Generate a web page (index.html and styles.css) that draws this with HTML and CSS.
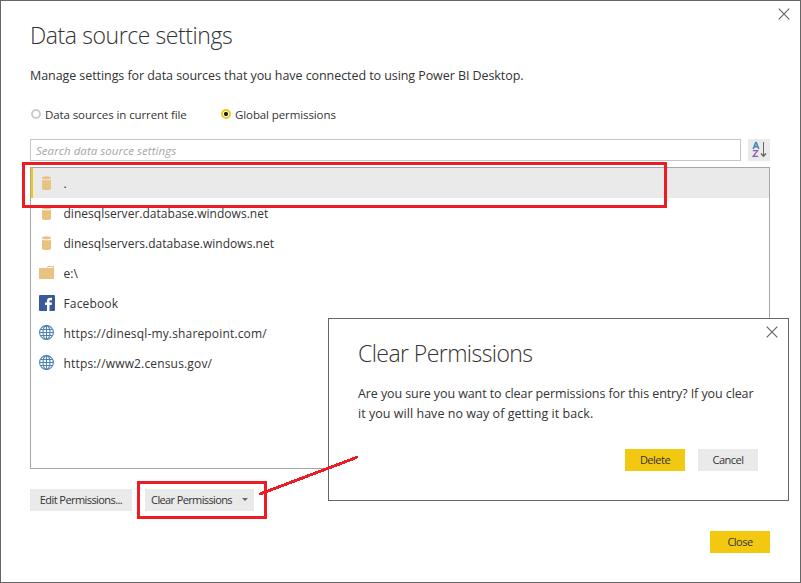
FILE: index.html
```html
<!DOCTYPE html>
<html lang="en">
<head>
    <meta charset="UTF-8">
    <meta name="viewport" content="width=device-width, initial-scale=1.0">
    <title>Data source settings</title>
    <link rel="stylesheet" href="styles.css">
</head>
<body>
    <svg class="sprite" width="0" height="0">
        <symbol id="db" viewBox="0 0 16 16">
            <ellipse cx="7.5" cy="2.700" rx="4.5" ry="1.5" fill="#e9c282"/>
            <path d="M3 4.400c1 1.200 8 1.200 9 0v9.700c-1 1.300-8 1.300-9 0z" fill="#e9c282"/>
        </symbol>
        <symbol id="folder" viewBox="0 0 16 16">
            <path d="M0 3h8l1-2h6v13H0z" fill="#e9c282"/>
            <path d="M9 2.500h5" stroke="#fff" stroke-width="1"/>
        </symbol>
        <symbol id="facebook" viewBox="0 0 16 16">
            <rect width="16" height="16" rx="1" fill="#3b5998"/>
            <path d="M8 16V10H6V7.600h2V6c0-2 1.200-3.200 3.200-3.200H13v2.400h-1.400c-.8 0-1.100.3-1.100 1v1.400H13l-.4 2.400h-2.100V16z" fill="#fff"/>
        </symbol>
        <symbol id="globe" viewBox="0 0 16 16">
            <g fill="none" stroke="#4f82b4" stroke-width="1.100">
                <circle cx="7.500" cy="7.500" r="6.900"/>
                <ellipse cx="7.500" cy="7.500" rx="3.500" ry="6.900"/>
                <path d="M7.500 .5v14M.5 7.500h14M1.700 4.500h11.600M1.700 10.500h11.600"/>
            </g>
        </symbol>
        <symbol id="close" viewBox="0 0 12 12">
            <path d="M.7.7l10.600 10.600M11.300.7L.7 11.300" stroke="#666" stroke-width="1.200"/>
        </symbol>
    </svg>

    <div class="window">
        <svg class="close-icon"><use href="#close"/></svg>
        <h1>Data source settings</h1>
        <p class="intro">Manage settings for data sources that you have connected to using Power BI Desktop.</p>

        <div class="scope">
            <label class="option"><span class="radio"></span>Data sources in current file</label>
            <label class="option"><span class="radio checked"></span>Global permissions</label>
        </div>

        <div class="search-row">
            <div class="search">Search data source settings</div>
            <div class="sort">
                <svg width="22" height="22" viewBox="0 0 22 22">
                    <g fill="none">
                        <path d="M5.200 10L7.700 3.500h.6L10.800 10M6 7.600h4" stroke="#4a86b8" stroke-width="1.600"/>
                        <path d="M4.800 11.600h4.700L5.200 17.400h5" stroke="#8e5cb0" stroke-width="1.300"/>
                        <path d="M15.500 3v14" stroke="#666"/>
                        <path d="M13 14.500l2.500 2.700 2.500-2.700" stroke="#666" stroke-width="1.500"/>
                    </g>
                </svg>
            </div>
        </div>

        <ul class="sources">
            <li class="selected"><svg><use href="#db"/></svg><span>.</span></li>
            <li><svg><use href="#db"/></svg><span class="host">dinesqlserver.database.windows.net</span></li>
            <li><svg><use href="#db"/></svg><span class="host">dinesqlservers.database.windows.net</span></li>
            <li><svg><use href="#folder"/></svg><span>e:\</span></li>
            <li><svg><use href="#facebook"/></svg><span class="url">Facebook</span></li>
            <li><svg><use href="#globe"/></svg><span class="url">https://dinesql-my.sharepoint.com/</span></li>
            <li><svg><use href="#globe"/></svg><span class="url">https://www2.census.gov/</span></li>
        </ul>

        <div class="actions">
            <button class="edit">Edit Permissions...</button>
            <button class="clear">Clear Permissions<i class="caret"></i></button>
        </div>
        <div class="footer">
            <button class="primary">Close</button>
        </div>
    </div>

    <div class="dialog">
        <svg class="close-icon"><use href="#close"/></svg>
        <h2>Clear Permissions</h2>
        <p>Are you sure you want to clear permissions for this entry? If you clear<br><span class="last-line">it you will have no way of getting it back.</span></p>
        <div class="dialog-buttons">
            <button class="primary">Delete</button>
            <button>Cancel</button>
        </div>
    </div>

    <!-- red callouts -->
    <svg class="callouts" width="801" height="583" viewBox="0 0 801 583">
        <g fill="none" stroke="#ed1c24" stroke-width="3">
            <rect x="23.500" y="163.500" width="642" height="43"/>
            <rect x="138.500" y="482.500" width="127" height="35"/>
            <path d="M260 494L356.500 457.500" stroke-linecap="round" shape-rendering="crispEdges"/>
        </g>
    </svg>
</body>
</html>
```
FILE: styles.css
```css
* {
    box-sizing: border-box;
}

body {
    margin: 0;
    font-family: "Open Sans", "Noto Sans", sans-serif;
    font-size: 12px;
    color: #333;
    background: #fff;
}

.sprite {
    position: absolute;
}

.window {
    width: 801px;
    height: 583px;
    padding: 19px 30px 0 29px;
    border: 1px solid #666;
    display: flex;
    flex-direction: column;
}

h1, h2 {
    margin: 0;
    font-size: 23px;
    font-weight: 300;
    line-height: 30px;
    white-space: nowrap;
}

h1 {
    letter-spacing: -0.42px;
}

h2 {
    letter-spacing: -0.57px;
}

.close-icon {
    position: absolute;
    width: 12px;
    height: 12px;
    top: 8px;
    right: 11px;
}

.intro {
    margin: 16px 0 0;
    line-height: 20px;
    font-size: 12.5px;
    letter-spacing: -0.07px;
    white-space: nowrap;
}

.scope {
    display: flex;
    margin-top: 18px;
    height: 20px;
}

.option {
    display: flex;
    align-items: center;
    width: 190px;
    padding-left: 1px;
    gap: 4px;
    font-size: 11.5px;
    letter-spacing: -0.1px;
    white-space: nowrap;
}

.radio {
    width: 10px;
    height: 10px;
    border: 2px solid #ccc;
    border-radius: 50%;
}

.radio.checked {
    border-color: #f2c811;
    background: radial-gradient(circle, #222 1.8px, #fff 2.4px);
}

.search-row {
    display: flex;
    gap: 7px;
    margin-top: 15px;
}

.search {
    flex: 1;
    height: 22px;
    padding-left: 5px;
    border: 1px solid #c6c6c6;
    line-height: 21px;
    font-size: 11.5px;
    font-style: italic;
    letter-spacing: 0.04px;
    color: #a6a6a6;
}

.sort {
    width: 22px;
    height: 22px;
    background: #eaeaea;
}

.sort svg {
    display: block;
}

.sources {
    height: 302px;
    margin: 6px 0 0;
    padding: 0;
    border: 1px solid #a6a6a6;
    list-style: none;
}

.sources li {
    display: flex;
    align-items: center;
    gap: 8.5px;
    height: 30px;
    padding-left: 8px;
}

.sources li.selected {
    padding-left: 6px;
    border-left: 2px solid #f2c811;
    background: #eaeaea;
}

.sources svg {
    width: 16px;
    height: 16px;
}

.host {
    letter-spacing: 0.02px;
}

.url {
    letter-spacing: 0.16px;
}

.actions {
    display: flex;
    gap: 13px;
    margin-top: 20px;
}

button {
    display: flex;
    align-items: center;
    justify-content: center;
    width: 60px;
    height: 22px;
    padding: 0 0 2px;
    border: 0;
    background: #eaeaea;
    color: #333;
    font-family: inherit;
    font-size: 11px;
    letter-spacing: -0.5px;
    white-space: nowrap;
}

button.primary {
    background: #f2c811;
}

button.edit {
    width: 102px;
    letter-spacing: -0.57px;
}

button.clear {
    width: 109px;
    gap: 10px;
    letter-spacing: -0.63px;
}

.caret {
    border: 3px solid transparent;
    border-top-color: #666;
    border-bottom: 0;
}

.footer {
    display: flex;
    justify-content: flex-end;
    margin-top: 20px;
}

/* modal lies over the settings window */
.dialog {
    position: absolute;
    left: 328px;
    top: 318px;
    width: 461px;
    height: 183px;
    padding: 19px 30px 0 29px;
    border: 1px solid #666;
    background: #fff;
}

.dialog .close-icon {
    top: 7px;
    right: 10px;
}

.dialog p {
    margin: 16px 0 0;
    line-height: 20px;
    font-size: 12.5px;
    letter-spacing: -0.09px;
    white-space: nowrap;
}

.last-line {
    letter-spacing: 0.04px;
}

.dialog-buttons {
    display: flex;
    justify-content: flex-end;
    gap: 13px;
    margin-top: 25px;
}

.callouts {
    position: absolute;
    left: 0;
    top: 0;
    pointer-events: none;
}
```
